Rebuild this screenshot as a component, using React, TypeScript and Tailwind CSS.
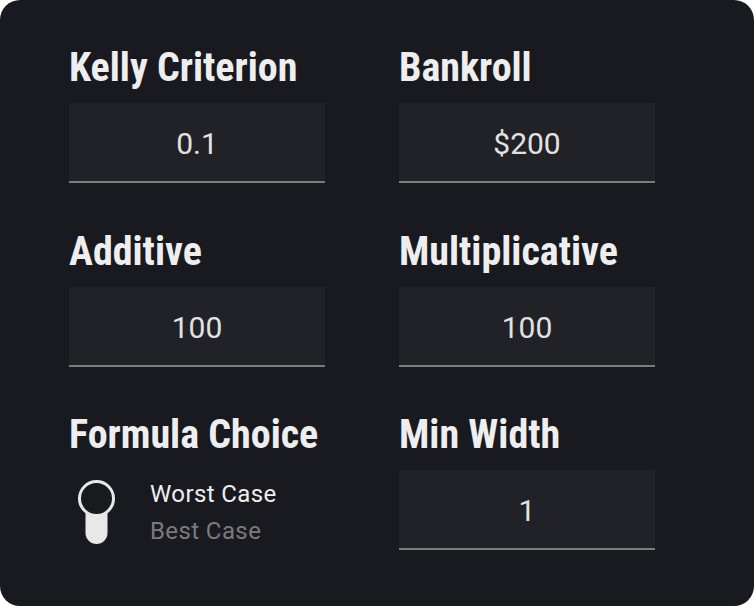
import React from "react";

const labelCls =
  "text-[40px] leading-[48px] font-bold text-[#eeeeee] font-stretch-condensed whitespace-nowrap";
const labelStyleFont = { fontFamily: "'Roboto Condensed', Roboto, 'Liberation Sans', sans-serif" };

function Field({ label, value }: { label: string; value: string }) {
  return (
    <div className="flex flex-col">
      <div className={labelCls} style={labelStyleFont}>
        {label}
      </div>
      <div className="mt-[11px] h-[80px] w-[256px] bg-[#202228] border-b-2 border-[#7c7c7c] flex items-center justify-center pt-[3px] text-[30px] text-[#e2e2e2] font-['Roboto',sans-serif]">
        {value}
      </div>
    </div>
  );
}

export default function App() {
  return (
    <div className="w-[754px] h-[608px] bg-white">
      <div className="w-[754px] h-[606px] bg-[#181a20] rounded-[20px] pt-[44px] pl-[69px] font-['Roboto',sans-serif]">
        <div className="grid grid-cols-[256px_256px] gap-x-[74px] gap-y-[44.5px]">
          <Field label="Kelly Criterion" value="0.1" />
          <Field label="Bankroll" value="$200" />
          <Field label="Additive" value="100" />
          <Field label="Multiplicative" value="100" />
          <div className="flex flex-col">
            <div className={labelCls} style={labelStyleFont}>
              Formula Choice
            </div>
            <div className="flex items-start mt-[17px]">
              <svg
                width="37"
                height="64"
                viewBox="0 0 37 64"
                className="ml-[9px] mt-[4px] shrink-0"
              >
                <rect x="7.5" y="18" width="22" height="46" rx="11" fill="#e8e8e8" />
                <circle cx="18.5" cy="18.5" r="17" fill="#181a20" stroke="#e8e8e8" strokeWidth="3" />
              </svg>
              <div className="ml-[35px] flex flex-col text-[24px] leading-[37px] tracking-[0.4px]">
                <span className="text-[#eeeeee]">Worst Case</span>
                <span className="text-[#7b7b7b]">Best Case</span>
              </div>
            </div>
          </div>
          <Field label="Min Width" value="1" />
        </div>
      </div>
    </div>
  );
}
